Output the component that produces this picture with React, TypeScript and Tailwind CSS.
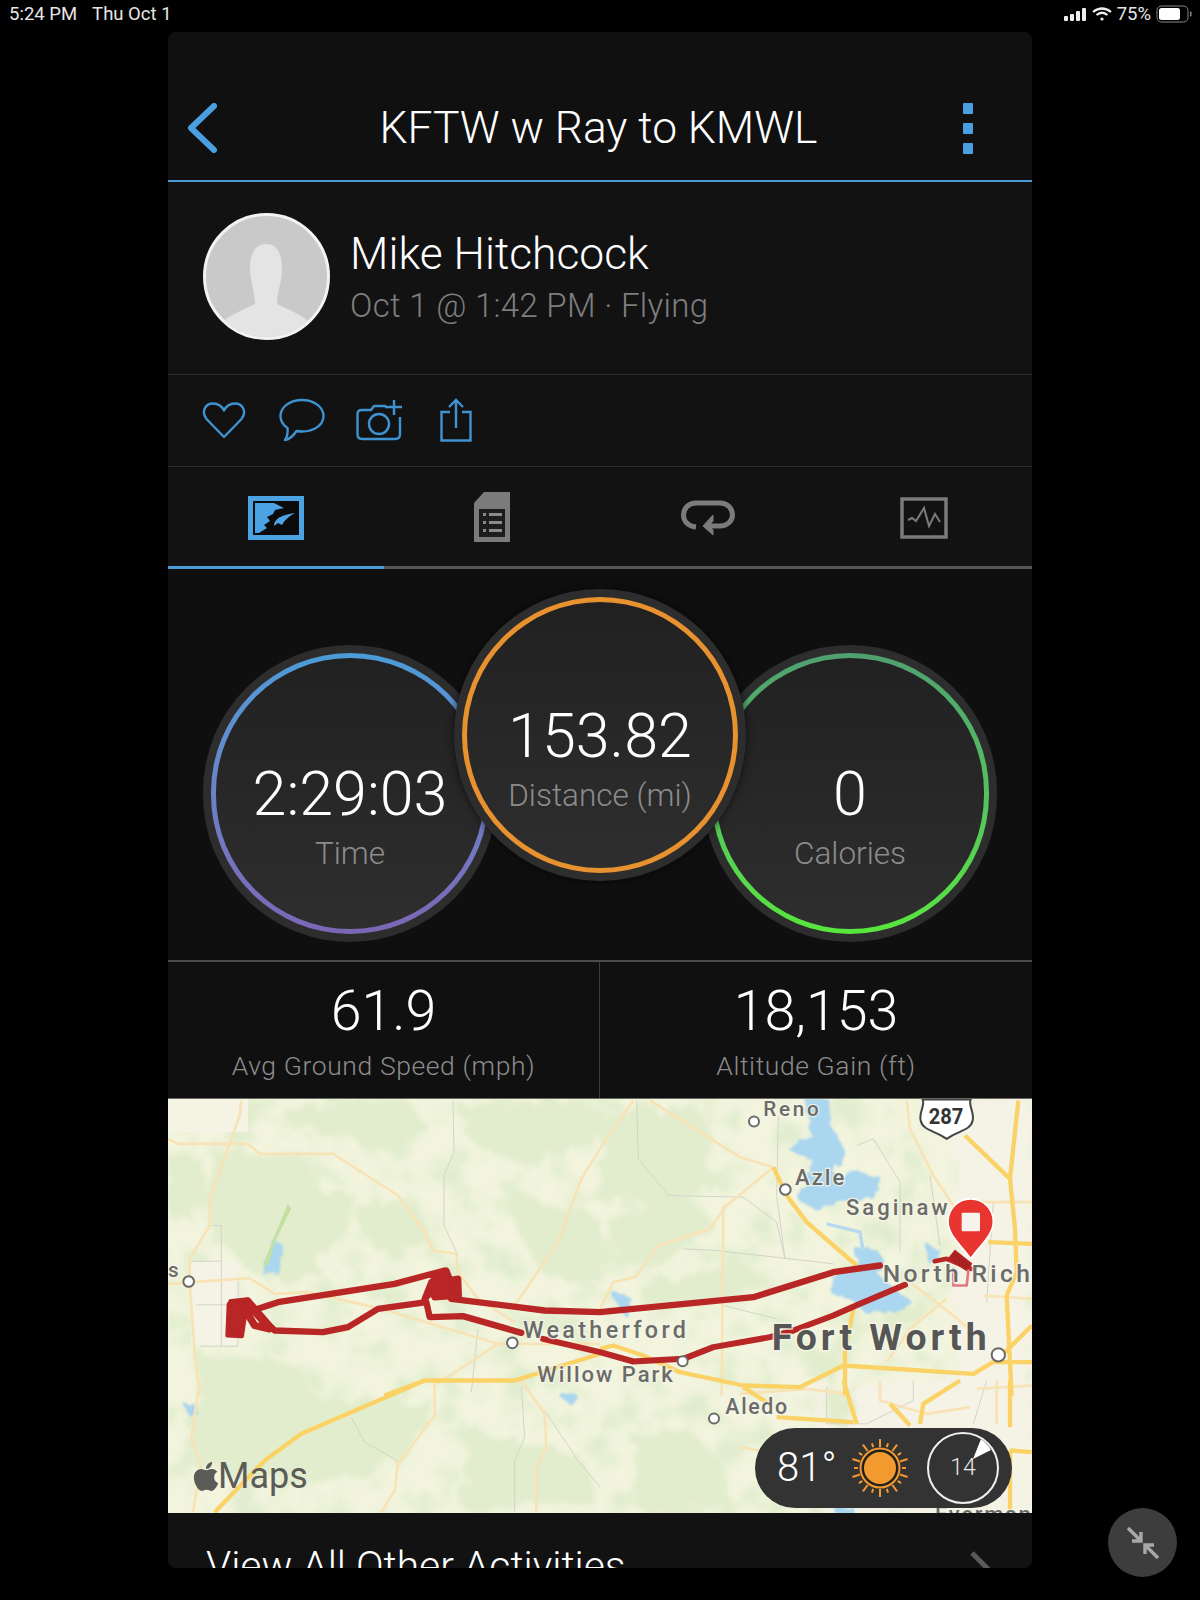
import { FaApple } from 'react-icons/fa';

const uiFont = "font-['Roboto','Liberation_Sans',sans-serif]";

// map drawing uses 3x units, so coordinates read straight off the enlarged crops
const E = 1296; // x offset of the eastern half of the map
const S = 855; // y offset of the southern part of the map
const SE = 1716; // x offset of the south-east part

const shift = (pts: number[][], dx = 0, dy = 0) => pts.map(([x, y]) => `${x + dx},${y + dy}`).join(' ');

const greens = [
  shift([[130, 180], [400, 170], [470, 300], [560, 290], [540, 400], [470, 470], [400, 560], [250, 540], [170, 440], [120, 320]]),
  shift([[0, 170], [100, 180], [120, 320], [20, 380], [0, 340]]),
  shift([[330, 20], [720, 15], [780, 110], [640, 170], [500, 120], [360, 90]]),
  shift([[560, 340], [740, 300], [790, 440], [680, 480], [600, 440]]),
  shift([[870, 30], [1296, 20], [1296, 120], [1100, 210], [950, 160], [880, 110]]),
  shift([[1000, 260], [1150, 330], [1296, 370], [1296, 560], [1130, 540], [1040, 400]]),
  shift([[80, 780], [400, 800], [440, 900], [800, 920], [760, 1050], [600, 1140], [300, 1160], [40, 1100], [90, 900]]),
  shift([[0, 60], [280, 30], [340, 110], [330, 260], [200, 360], [90, 300], [0, 320]], E),
  shift([[20, 380], [260, 300], [340, 400], [250, 490], [60, 510]], E),
  shift([[130, 560], [420, 500], [520, 560], [300, 640], [120, 620]], E),
  shift([[850, 640], [970, 610], [960, 700], [860, 720]], E),
  shift([[640, 770], [720, 780], [700, 850], [640, 860]], E),
  shift([[900, 1000], [1240, 1080], [1296, 1220], [880, 1240]]),
  shift([[1400, 1020], [1560, 1000], [1660, 1100], [1700, 1240], [1400, 1240]]),
  shift([[260, 20], [340, 10], [350, 130], [260, 130]], SE, S),
];

const paleRoads = [
  shift([[220, 15], [215, 60], [125, 310], [125, 390], [65, 490], [65, 560], [80, 770], [95, 900]]),
  shift([[95, 0], [70, 175], [100, 250], [75, 395]], 0, S),
  shift([[0, 130], [30, 145], [240, 145], [275, 175], [495, 175], [690, 300], [770, 410], [795, 465], [865, 475], [870, 530], [930, 610], [1040, 680]]),
  shift([[0, 565], [245, 548], [320, 595], [420, 590], [640, 640], [990, 745], [1296, 745]]),
  shift([[1296, 160], [1240, 250], [1170, 440], [1040, 630]]),
  shift([[990, 745], [800, 870], [800, 900]]),
  shift([[800, 0], [800, 105], [690, 250], [680, 330], [640, 395]], 0, S),
  shift([[1060, 0], [1130, 100], [1135, 200], [1105, 265], [1105, 395]], 0, S),
  shift([[100, 15], [0, 160]], E),
  shift([[150, 15], [420, 185], [520, 215], [380, 330], [330, 400], [175, 450], [105, 545], [40, 560], [0, 640]], E),
  shift([[370, 330], [365, 900]], E),
  shift([[920, 15], [930, 100], [1000, 240], [1060, 330]], E),
  shift([[930, 560], [1060, 660], [1130, 720]], E),
  shift([[1040, 610], [930, 700], [860, 800]], E),
  shift([[0, 40], [200, 25], [320, 40]], SE, S),
  shift([[420, 0], [420, 60], [560, 100], [690, 80]], SE, S),
  shift([[0, 200], [60, 210], [90, 270], [240, 300], [300, 380]], SE, S),
  shift([[770, 0], [770, 130]], SE, S),
  shift([[1150, 600], [1296, 610]], E),
  shift([[1140, 320], [1296, 320]], E),
  shift([[1130, 880], [1296, 870]], E),
];

const grayLines = [
  shift([[855, 15], [858, 170], [828, 240], [828, 390], [870, 480]]),
  shift([[135, 390], [160, 390], [160, 750]]),
  shift([[70, 497], [160, 497]]),
  shift([[85, 628], [210, 628]]),
  shift([[95, 752], [210, 752], [210, 560]]),
  shift([[930, 700], [910, 890]]),
  shift([[550, 110], [590, 185], [680, 235], [690, 250]], 0, S),
  shift([[1060, 20], [1070, 170], [1040, 240], [1040, 395]], 0, S),
  shift([[1130, 90], [1230, 240], [1296, 320]], 0, S),
  shift([[110, 15], [115, 190], [205, 300], [430, 305], [530, 380], [555, 490]], E),
  shift([[535, 60], [530, 300], [555, 490]], E),
  shift([[250, 460], [350, 465], [700, 505]], E),
  shift([[770, 150], [820, 130], [900, 260], [900, 470]], E),
  shift([[990, 240], [1020, 450]], E),
  shift([[1180, 320], [1160, 620]], E),
  shift([[370, 630], [530, 670]], E),
  shift([[260, 20], [260, 130], [380, 130]], SE, S),
  shift([[520, 0], [520, 60], [380, 130]], SE, S),
  shift([[740, 0], [700, 130]], SE, S),
];

const highways = [
  shift([[650, 900], [770, 855], [1040, 855], [1296, 775]]),
  shift([[770, 0], [400, 160], [290, 240], [140, 395]], 0, S),
  shift([[0, 760], [40, 750], [130, 780], [240, 830], [430, 870], [600, 875], [730, 810], [1120, 835], [1195, 790], [1296, 690]], E),
  shift([[520, 215], [560, 300], [620, 380], [770, 510]], E),
  shift([[1095, 120], [1230, 250], [1245, 400], [1250, 530], [1220, 600], [1235, 900]], E),
  shift([[1255, 15], [1230, 250]], E),
  shift([[1165, 440], [1296, 445]], E),
  shift([[735, 900], [735, 770], [760, 640]], E),
  shift([[1180, 800], [1296, 800]], E),
  shift([[310, 0], [350, 130]], SE, S),
  shift([[10, 20], [80, 65]], SE, S),
  shift([[110, 110], [340, 125]], SE, S),
  shift([[450, 70], [510, 135]], SE, S),
  shift([[540, 130], [550, 70], [660, 0]], SE, S),
  shift([[810, 0], [810, 140]], SE, S),
  shift([[810, 210], [875, 215]], SE, S),
  shift([[810, 210], [810, 395]], SE, S),
];

const lakes = [
  shift([[620, 15], [680, 15], [690, 90], [735, 180], [690, 230], [720, 250], [760, 230], [840, 250], [820, 300], [740, 310], [650, 340], [600, 310], [630, 240], [640, 190], [570, 160], [640, 120]], E),
  shift([[770, 460], [830, 470], [850, 500], [820, 530], [900, 600], [930, 620], [880, 640], [800, 650], [760, 610], [700, 590], [700, 550], [780, 510]], E),
  shift([[35, 590], [90, 610], [80, 660], [60, 630]], E),
  shift([[980, 450], [1020, 470], [990, 500]], E),
  shift([[320, 445], [340, 450], [325, 530], [285, 535], [300, 510]]),
  shift([[55, 75], [85, 80], [70, 105]], 0, S),
  shift([[290, 385], [340, 385], [340, 400], [290, 400]], SE, S),
  shift([[1180, 45], [1225, 50], [1210, 70]], 0, S),
];

const routeA = shift([[270, 640], [330, 620], [680, 565], [830, 525], [790, 560], [770, 610], [790, 590], [835, 525], [860, 590], [850, 610], [1130, 645], [1296, 650], [1756, 605], [1996, 530], [2136, 510]]);
const routeB = shift([[190, 620], [240, 615], [305, 690], [320, 705], [465, 710], [540, 695], [630, 640], [775, 620], [785, 665], [885, 662], [1060, 712]]);
const routeC = shift([[1125, 730], [1296, 770], [1396, 798], [1546, 790], [1636, 755], [1806, 725], [1876, 705], [1996, 660], [2076, 625], [2211, 568]]);
const routeEnd = shift([[2300, 497], [2336, 490], [2410, 520]]);

const labels = [
  { t: 's', x: 0, y: 545, s: 62, sp: 5 },
  { t: 'Weatherford', x: 1065, y: 726, s: 70, sp: 10 },
  { t: 'Willow Park', x: 1108, y: 860, s: 66, sp: 6 },
  { t: 'Reno', x: 490 + E, y: 62, s: 62, sp: 8 },
  { t: 'Azle', x: 585 + E, y: 268, s: 66, sp: 6 },
  { t: 'Saginaw', x: 738 + E, y: 358, s: 66, sp: 9 },
  { t: 'North Rich', x: 848 + E, y: 560, s: 74, sp: 10 },
  { t: 'Aledo', x: 1672, y: 955, s: 64, sp: 5 },
  { t: 'Everman', x: 585 + SE, y: 425 + S, s: 66, sp: 5 },
];

const places = [
  [62, 558, 16],
  [1033, 742, 16],
  [462 + E, 78, 15],
  [556 + E, 282, 16],
  [248 + E, 797, 15],
  [1195 + E, 778, 20],
  [1638, 969, 15],
];

function MapArt() {
  return (
    <svg viewBox="0 12 2592 1239" className="block w-full h-full">
      <defs>
        <filter id="organic" x="-10%" y="-10%" width="120%" height="120%">
          <feTurbulence type="fractalNoise" baseFrequency="0.018" numOctaves="3" seed="4" />
          <feDisplacementMap in="SourceGraphic" scale="90" />
          <feGaussianBlur stdDeviation="8" />
        </filter>
        <filter id="lakeEdge" x="-10%" y="-10%" width="120%" height="120%">
          <feTurbulence type="fractalNoise" baseFrequency="0.035" numOctaves="2" seed="9" />
          <feDisplacementMap in="SourceGraphic" scale="28" />
          <feGaussianBlur stdDeviation="2.5" />
        </filter>
        <filter id="mottle" x="0" y="0" width="100%" height="100%" colorInterpolationFilters="sRGB">
          <feTurbulence type="fractalNoise" baseFrequency="0.011" numOctaves="4" seed="12" />
          <feColorMatrix values="0 0 0 0 0.885  0 0 0 0 0.93  0 0 0 0 0.81  5 0 0 0 -2.5" />
          <feGaussianBlur stdDeviation="7" />
        </filter>
        <filter id="soft">
          <feGaussianBlur stdDeviation="1.6" />
        </filter>
      </defs>
      <rect x="0" y="0" width="2592" height="1260" fill="#f2f4dd" />
      <rect x="0" y="0" width="2592" height="1260" filter="url(#mottle)" />
      <rect x="0" y="0" width="240" height="110" fill="#f5f3e3" filter="url(#soft)" />
      <rect x="70" y="500" width="140" height="250" fill="#f5f3e6" />
      <rect x="2360" y="12" width="232" height="1239" fill="#f5f2e6" filter="url(#organic)" />
      <rect x="1950" y="860" width="642" height="400" fill="#f5f2e6" filter="url(#organic)" />
      <g filter="url(#organic)" fill="#e2edcd">
        {greens.map((p, i) => <polygon key={i} points={p} />)}
      </g>
      <g filter="url(#lakeEdge)">
        {lakes.map((p, i) => <polygon key={i} points={p} fill="#aad6ef" stroke="#aad6ef" strokeLinejoin="round" strokeWidth="10" />)}
      </g>
      <g filter="url(#soft)">
        <polygon points="360,325 370,340 320,440 300,510 285,510 320,420" fill="#c5dfa0" />
        <polyline points={shift([[680, 385], [780, 410], [790, 470]], E)} fill="none" stroke="#b5daf0" strokeWidth="10" />
        {grayLines.map((p, i) => <polyline key={i} points={p} fill="none" stroke="#d3d4c8" strokeWidth="3" />)}
        {paleRoads.map((p, i) => <polyline key={i} points={p} fill="none" stroke="#f8e3b6" strokeWidth="8" strokeLinejoin="round" />)}
        {highways.map((p, i) => <polyline key={i} points={p} fill="none" stroke="#fbd266" strokeWidth="13" strokeLinejoin="round" />)}
      </g>
      <g filter="url(#soft)" fill="none" stroke="#b82525" strokeLinejoin="round" strokeLinecap="round">
        <polyline points={routeA} strokeWidth="19" />
        <polyline points={routeB} strokeWidth="19" />
        <polyline points={routeC} strokeWidth="18" />
        <polyline points={routeEnd} strokeWidth="14" />
        <polygon points="182,625 238,612 222,722 178,720" strokeWidth="12" fill="#b82525" />
        <polyline points="240,625 305,700 260,690 230,640" strokeWidth="22" />
        <polygon points="790,565 870,550 872,600 800,605" strokeWidth="20" fill="#b82525" />
        <polygon points={shift([[1065, 465], [1115, 505], [1100, 525], [1045, 490]], E)} fill="#a82020" strokeWidth="4" />
        <polyline points={shift([[1060, 520], [1060, 570], [1100, 570], [1105, 525]], E)} stroke="#e07a80" strokeWidth="8" />
      </g>
      {labels.map(l => (
        <text key={l.t} x={l.x} y={l.y} fontSize={l.s} letterSpacing={l.sp} fontFamily="Roboto, sans-serif" fontWeight="500" fill="#6b6b68" stroke="#f6f6ea" strokeOpacity="0.8" strokeWidth="8" paintOrder="stroke">
          {l.t}
        </text>
      ))}
      <text x={515 + E} y={762} fontSize="112" letterSpacing="12" fontFamily="Roboto, sans-serif" fontWeight="700" fill="#565654" stroke="#f6f6ea" strokeOpacity="0.8" strokeWidth="9" paintOrder="stroke">
        Fort Worth
      </text>
      {places.map(([x, y, r], i) => (
        <circle key={i} cx={x} cy={y} r={r} fill="#fff" stroke="#6a6a68" strokeWidth="6" />
      ))}
      <g transform={`translate(${E} 0)`}>
        <path d="M968 12 L1112 12 C1104 30 1124 50 1118 75 C1112 105 1075 105 1040 130 C1005 105 968 105 962 75 C956 50 976 30 968 12 Z" fill="#fff" stroke="#444" strokeWidth="6" />
        <text x="986" y="86" fontSize="66" fontWeight="700" fontFamily="Roboto, sans-serif" fill="#333" textLength="104" lengthAdjust="spacingAndGlyphs">287</text>
        <path d="M1112 490 C1085 450 1044 420 1044 378 A68 68 0 0 1 1180 378 C1180 420 1139 450 1112 490 Z" fill="#e9352f" stroke="#fff" strokeWidth="5" />
        <rect x="1085" y="352" width="55" height="55" rx="3" fill="#f7f2ee" />
      </g>
    </svg>
  );
}

function Ring({ value, label, gradient, offset, mid }: { value: string; label: string; gradient: string; offset: string; mid?: boolean }) {
  return (
    <div className={`${offset} ${mid ? 'relative z-10 w-[292px] h-[292px] -mx-[43px] shadow-[0_0_10px_rgba(0,0,0,0.6)]' : 'w-[294px] h-[297px]'} shrink-0 rounded-full bg-[#2d2d2e] p-[8px]`}>
      <div className={`w-full h-full rounded-full p-[5px] ${gradient}`}>
        <div className={`w-full h-full rounded-full bg-gradient-to-b from-[#212122] to-[#2e2e2f] flex flex-col items-center ${mid ? 'pt-[104px]' : 'pt-[106px]'}`}>
          <div className="h-[60px] leading-[60px] text-[61px] font-light text-white">{value}</div>
          <div className="h-[40px] leading-[40px] mt-[10px] text-[31.5px] font-light text-[#8c8c8c]">{label}</div>
        </div>
      </div>
    </div>
  );
}

function Stat({ value, label, width }: { value: string; label: string; width: string }) {
  return (
    <div className={`${width} flex flex-col items-center pt-[20px]`}>
      <div className="h-[60px] leading-[60px] text-[55.5px] font-light text-white">{value}</div>
      <div className="h-[40px] leading-[40px] mt-[4px] text-[26.5px] font-light tracking-[0.6px] text-[#8c8c8c]">{label}</div>
    </div>
  );
}

export default function App() {
  return (
    <div className={`relative w-[1200px] h-[1600px] bg-black overflow-hidden ${uiFont}`}>
      <div className="h-[32px] flex items-start justify-between pl-[9px] pr-[8px] pt-[4px] text-[#e6e6e6] text-[18.5px] leading-[20px]">
        <div className="flex gap-[15px]">
          <span>5:24 PM</span>
          <span>Thu Oct 1</span>
        </div>
        <div className="flex items-center gap-[5px]">
          <svg width="24" height="14" viewBox="0 0 24 14" fill="#eee">
            <rect x="1" y="9" width="4" height="5" rx="1" />
            <rect x="7" y="7" width="4" height="7" rx="1" />
            <rect x="13" y="4" width="4" height="10" rx="1" />
            <rect x="19" y="1" width="4" height="13" rx="1" />
          </svg>
          <svg width="20" height="14" viewBox="0 0 20 14" fill="none" stroke="#eee" strokeWidth="2.2">
            <path d="M1 5 Q10 -2 19 5" />
            <path d="M4.5 8 Q10 3.5 15.5 8" />
            <circle cx="10" cy="12" r="1.6" fill="#eee" stroke="none" />
          </svg>
          <span>75%</span>
          <svg width="36" height="18" viewBox="0 0 36 18">
            <rect x="1" y="1" width="31" height="16" rx="4.5" fill="none" stroke="#8a8a8a" />
            <rect x="3" y="3" width="21" height="12" rx="2.5" fill="#fff" />
            <rect x="34" y="6.5" width="1.5" height="5" rx="0.7" fill="#8a8a8a" />
          </svg>
        </div>
      </div>

      <div className="ml-[168px] w-[864px] h-[1536px] rounded-lg overflow-hidden bg-[#121213]">
        <div className="h-[150px] bg-[#101011] border-b-2 border-[#4a9ad4] flex items-center justify-between pt-[44px] pl-[19px] pr-[59px]">
          <svg width="30" height="50" viewBox="0 0 30 50" fill="none" stroke="#4a9fe0" strokeWidth="6" strokeLinecap="round" strokeLinejoin="round">
            <path d="M27 3 L4 25 L27 47" />
          </svg>
          <div className="text-[44.4px] leading-[50px] text-white font-light ml-[17px]">KFTW w Ray to KMWL</div>
          <div className="flex flex-col gap-[9px]">
            <div className="w-[10px] h-[11px] rounded-[1px] bg-[#4a9fe0]" />
            <div className="w-[10px] h-[11px] rounded-[1px] bg-[#4a9fe0]" />
            <div className="w-[10px] h-[11px] rounded-[1px] bg-[#4a9fe0]" />
          </div>
        </div>

        <div className="h-[193px] border-b border-[#2c2c2d] flex items-center pl-[35px] pb-[3px]">
          <div className="w-[127px] h-[127px] rounded-full border-[3px] border-[#f2f2f2] bg-[#c9c9c9] overflow-hidden">
            <svg viewBox="0 0 121 121" className="block w-full h-full" fill="#e4e4e4">
              <path d="M60 28 C71 28 76 38 76 52 C76 66 71 76 71 88 C85 95 100 100 110 112 L110 121 L10 121 L10 112 C20 100 35 95 49 88 C49 76 44 66 44 52 C44 38 49 28 60 28 Z" />
            </svg>
          </div>
          <div className="ml-[20px]">
            <div className="text-[44.4px] leading-[52px] font-light text-white">Mike Hitchcock</div>
            <div className="text-[33px] leading-[40px] font-light text-[#7e7e7e] tracking-[0.3px] mt-[6px]">Oct 1 @ 1:42 PM · Flying</div>
          </div>
        </div>

        <div className="h-[92px] border-b border-[#2c2c2d] flex items-center pl-[34px] pb-[2px]">
          <svg width="44" height="38" viewBox="0 0 44 38" fill="none" stroke="#3f93d0" strokeWidth="2.4" strokeLinejoin="round">
            <path d="M22 36 L4.5 18 C-1 11 3 2.5 11 2.5 C16 2.5 20 5.5 22 9.5 C24 5.5 28 2.5 33 2.5 C41 2.5 45 11 39.5 18 Z" />
          </svg>
          <svg className="ml-[33px]" width="46" height="44" viewBox="0 0 46 44" fill="none" stroke="#3f93d0" strokeWidth="2.4" strokeLinejoin="round">
            <path d="M23 2 C35 2 44.5 9 44.5 18 C44.5 27 35 33.5 23 33.5 C21 33.5 19 33.3 17.5 33 C15 37 11 41 6 42 C8 39 9 34 8.5 30 C4 27 1.5 23 1.5 18 C1.5 9 11 2 23 2 Z" />
          </svg>
          <svg className="ml-[31px]" width="47" height="42" viewBox="0 0 47 42" fill="none" stroke="#3f93d0" strokeWidth="2.4" strokeLinejoin="round">
            <path d="M30 7 L18 7 L15 11 L6 11 Q1.5 11 1.5 15 L1.5 35 Q1.5 40 6 40 L39 40 Q44 40 44 35 L44 18" />
            <circle cx="23" cy="25" r="10" />
            <path d="M29 8 L46 8 M38 1 L38 16" />
          </svg>
          <svg className="ml-[37px]" width="32" height="44" viewBox="0 0 32 44" fill="none" stroke="#3f93d0" strokeWidth="2.4">
            <path d="M10 14 L1.5 14 L1.5 42.5 L30.5 42.5 L30.5 14 L22 14" />
            <path d="M16 30 L16 2 M9 9 L16 2 L23 9" />
          </svg>
        </div>

        <div className="h-[102px] border-b-[3px] border-[#555556] relative grid grid-cols-4">
          <div className="flex items-center justify-center pt-[2px]">
            <svg width="56" height="44" viewBox="0 0 56 44">
              <rect x="2.5" y="2.5" width="51" height="39" fill="#0b0b0b" stroke="#4ba3e3" strokeWidth="5" />
              <path d="M7 7 L26 7 L36 12 L27 14 L25 18 L19 21 L22 25 L16 29 L19 32 L11 37 L7 37 Z" fill="#4ba3e3" />
              <path d="M26 30 C26 22 34 19 47 17 C40 21 37 24 34 29 L30 27 Z" fill="#4ba3e3" />
            </svg>
          </div>
          <div className="flex items-center justify-center">
            <svg width="38" height="52" viewBox="0 0 38 52">
              <path d="M11 1 L37 1 L37 51 L1 51 L1 12 Z" fill="#7b7b7b" />
              <path d="M6 18 L32 18 L32 46 L6 46 Z" fill="#1c1c1c" />
              <path d="M10 22 h3 v3 h-3 z M16 22 h13 v3 h-13 z M10 30 h3 v3 h-3 z M16 30 h13 v3 h-13 z M10 38 h3 v3 h-3 z M16 38 h13 v3 h-13 z" fill="#8a8a8a" />
            </svg>
          </div>
          <div className="flex items-center justify-center pt-[2px]">
            <svg width="54" height="36" viewBox="0 0 54 36" fill="none">
              <path d="M15 27 C7 26 2.5 21 2.5 15 C2.5 8 8 3 15 3 L39 3 C46 3 51.5 8 51.5 15 C51.5 21 46 26 39 26 L26 26" stroke="#7b7b7b" strokeWidth="5" />
              <path d="M32 15 L22 26 L32 35 L32 30 L28 26 L32 21 Z" fill="#7b7b7b" stroke="#7b7b7b" strokeWidth="1" />
            </svg>
          </div>
          <div className="flex items-center justify-center pt-[2px]">
            <svg width="48" height="42" viewBox="0 0 48 42" fill="none" stroke="#7b7b7b">
              <rect x="2" y="2" width="44" height="38" strokeWidth="3.5" />
              <path d="M8 23 L12 21 L16 24 L24 11 L29 29 L35 17 L40 25" strokeWidth="2" />
            </svg>
          </div>
          <div className="absolute left-0 bottom-[-3px] w-[216px] h-[3px] bg-[#4a9ad4]" />
        </div>

        <div className="h-[391px] bg-[#0f0f10] flex justify-center items-start">
          <Ring value="2:29:03" label="Time" offset="mt-[76px]" gradient="bg-gradient-to-b from-[#4a9cd8] to-[#7c66b6]" />
          <Ring value="153.82" label="Distance (mi)" offset="mt-[20px]" gradient="bg-[#e8912f]" mid />
          <Ring value="0" label="Calories" offset="mt-[76px]" gradient="bg-gradient-to-b from-[#4fa06f] to-[#58e63a]" />
        </div>

        <div className="h-[138px] border-t-2 border-[#4c4c4d] flex bg-[#101011]">
          <Stat value="61.9" label="Avg Ground Speed (mph)" width="w-[431px]" />
          <div className="w-px bg-[#3c3c3d]" />
          <Stat value="18,153" label="Altitude Gain (ft)" width="flex-1" />
        </div>

        <div className="relative h-[415px] overflow-hidden border-t border-[#6a6a64]">
          <MapArt />
          <div className="absolute left-[24px] bottom-[18px] flex items-center text-[#5b5b58]">
            <FaApple className="w-[28px] h-[33px]" />
            <span className="text-[36px] leading-[38px] font-normal ml-[-2px]">Maps</span>
          </div>
          <div className="absolute right-[20px] bottom-[5px] w-[257px] h-[80px] rounded-full bg-[#333334] flex items-center pl-[22px]">
            <span className="text-[40px] font-light text-white w-[64px]">81°</span>
            <svg className="ml-[10px]" width="58" height="58" viewBox="-29 -29 58 58">
              <circle r="17" fill="#f29a2e" stroke="#1f1f1f" strokeWidth="2" />
              <circle r="19.5" fill="none" stroke="#f29a2e" strokeWidth="2" />
              {Array.from({ length: 20 }, (_, i) => (
                <line key={i} x1="0" y1={i % 2 ? -22 : -21} x2="0" y2={i % 2 ? -26 : -29} stroke="#f29a2e" strokeWidth="2" transform={`rotate(${i * 18})`} />
              ))}
            </svg>
            <div className="relative ml-[18px] w-[72px] h-[72px] rounded-full border-2 border-[#f0f0f0] flex items-center justify-center text-[23px] text-[#e8e8e8] font-light">
              14
              <svg className="absolute left-[44px] top-[5px]" width="20" height="20" viewBox="0 0 20 20">
                <path d="M0 20 L8 0 C12 3 16 7 18 11 Z" fill="#fff" />
              </svg>
            </div>
          </div>
        </div>

        <div className="h-[56px] bg-[#121213] flex justify-between pl-[38px] pr-[42px] pt-[28px] overflow-hidden">
          <div className="text-[40.8px] leading-[50px] font-light text-white whitespace-nowrap">View All Other Activities</div>
          <svg className="shrink-0 mt-[10px]" width="20" height="34" viewBox="0 0 20 34" fill="none" stroke="#5a5a5a" strokeWidth="5">
            <path d="M2 2 L17 17 L2 32" />
          </svg>
        </div>
      </div>

      <div className="absolute left-[1108px] top-[1508px] w-[69px] h-[69px] rounded-full bg-[#3d3d3d] flex items-center justify-center">
        <svg width="34" height="34" viewBox="0 0 34 34" fill="none" stroke="#a8a8a8" strokeWidth="3.4">
          <path d="M2 2 L15 15 M6 15 L15 15 L15 6" />
          <path d="M32 32 L19 19 M28 19 L19 19 L19 28" />
        </svg>
      </div>
    </div>
  );
}
